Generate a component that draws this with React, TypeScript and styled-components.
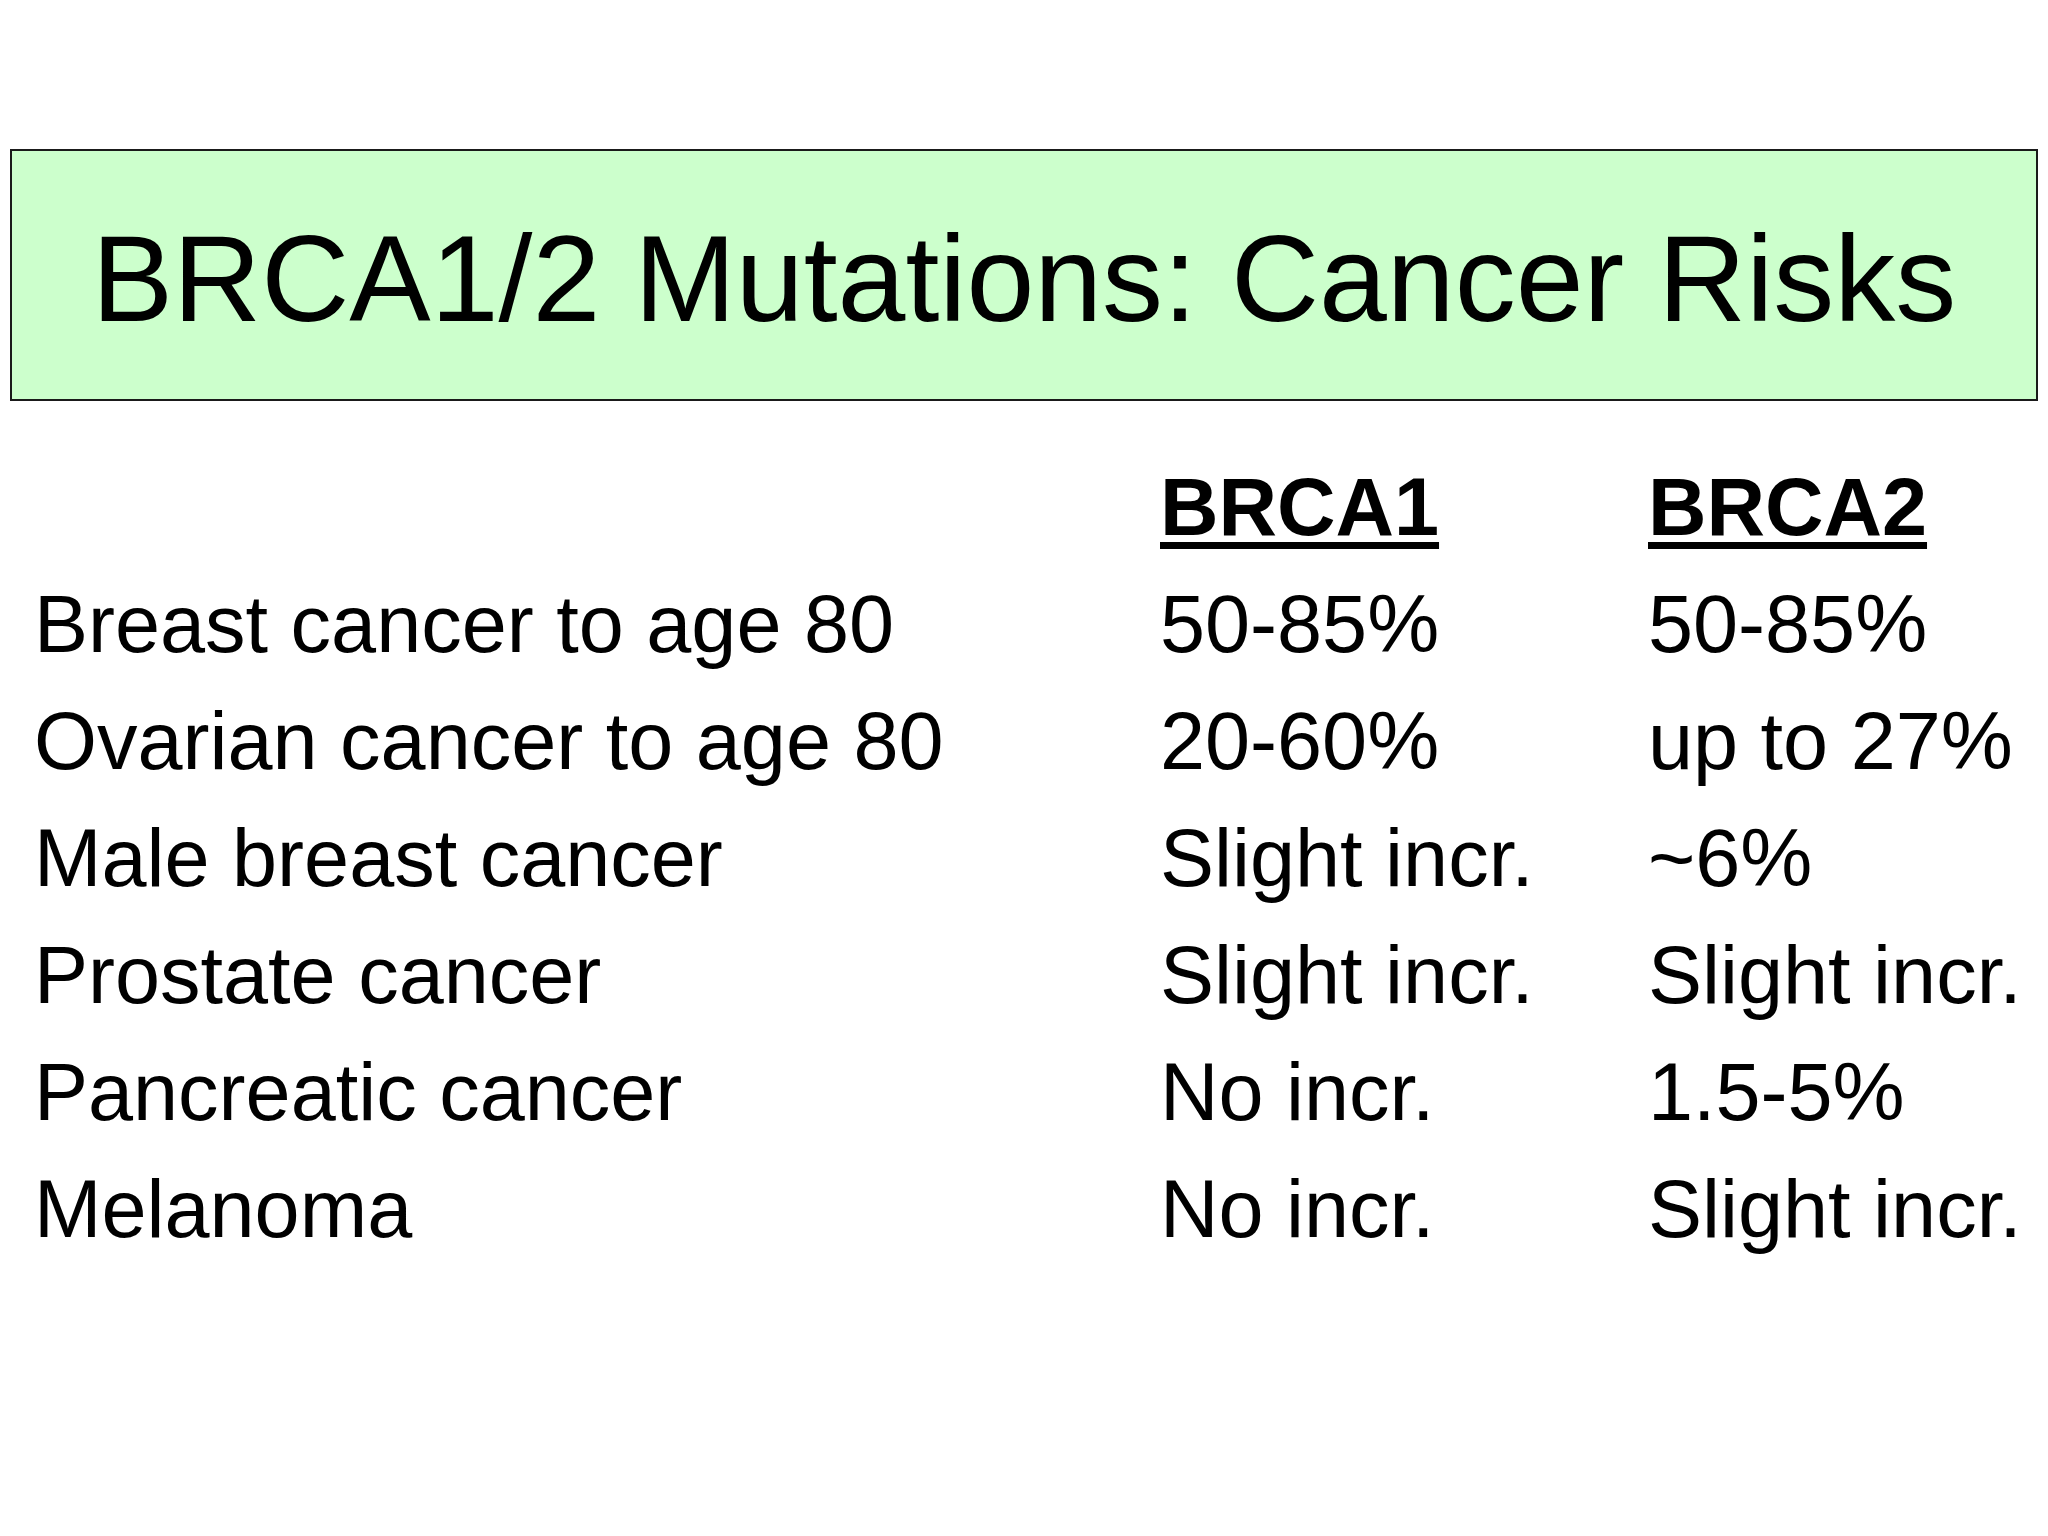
import React from "react";
import styled, { createGlobalStyle } from "styled-components";

const GlobalStyle = createGlobalStyle`
  html, body {
    margin: 0;
    padding: 0;
    background: #ffffff;
  }
  body {
    font-family: "Liberation Sans", Arial, sans-serif;
    color: #000000;
  }
`;

const Slide = styled.div`
  width: 2048px;
  height: 1536px;
  box-sizing: border-box;
  padding: 149px 10px 0 10px;
  background: #ffffff;
  display: flex;
  flex-direction: column;
`;

const TitleBox = styled.div`
  height: 252px;
  box-sizing: border-box;
  border: 2px solid #1a1a1a;
  background: #ccffcc;
  display: flex;
  align-items: center;
  justify-content: center;
  padding-top: 7px;
`;

const Title = styled.h1`
  margin: 0;
  font-family: "Liberation Sans", Arial, sans-serif;
  font-weight: 400;
  font-size: 122px;
  line-height: 122px;
  color: #000000;
  white-space: nowrap;
`;

const Table = styled.div`
  margin-top: 48px;
  padding-left: 24px;
  display: grid;
  grid-template-columns: 1126px 488px auto;
  font-size: 81px;
  line-height: 117px;
`;

const Cell = styled.div<{ $head?: boolean }>`
  white-space: nowrap;
  font-weight: ${(p) => (p.$head ? 700 : 400)};
  ${(p) =>
    p.$head
      ? `
    text-decoration: underline;
    text-decoration-thickness: 7px;
    text-underline-offset: 7px;
  `
      : ""}
`;

const rows: [string, string, string][] = [
  ["Breast cancer to age 80", "50-85%", "50-85%"],
  ["Ovarian cancer to age 80", "20-60%", "up to 27%"],
  ["Male breast cancer", "Slight incr.", "~6%"],
  ["Prostate cancer", "Slight incr.", "Slight incr."],
  ["Pancreatic cancer", "No incr.", "1.5-5%"],
  ["Melanoma", "No incr.", "Slight incr."],
];

export default function App() {
  return (
    <>
      <GlobalStyle />
      <Slide>
        <TitleBox>
          <Title>BRCA1/2 Mutations: Cancer Risks</Title>
        </TitleBox>
        <Table>
          <Cell />
          <Cell $head>BRCA1</Cell>
          <Cell $head>BRCA2</Cell>
          {rows.map((r) => (
            <React.Fragment key={r[0]}>
              <Cell>{r[0]}</Cell>
              <Cell>{r[1]}</Cell>
              <Cell>{r[2]}</Cell>
            </React.Fragment>
          ))}
        </Table>
      </Slide>
    </>
  );
}
